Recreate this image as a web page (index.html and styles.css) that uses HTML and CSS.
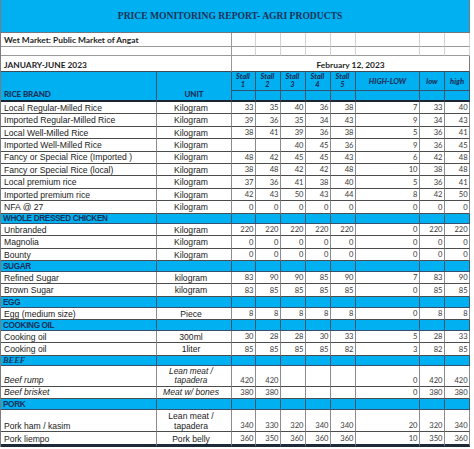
FILE: index.html
```html
<!DOCTYPE html>
<html>
<head>
<meta charset="utf-8">
<link rel="stylesheet" href="styles.css">
</head>
<body>
<table class="sheet">
  <colgroup>
    <col class="c-name"><col class="c-unit">
    <col class="c-s24"><col class="c-s25"><col class="c-s25"><col class="c-s25"><col class="c-s25">
    <col class="c-hl"><col class="c-s25"><col class="c-s25">
  </colgroup>
  <tr class="title"><td colspan="10">PRICE MONITORING REPORT- AGRI PRODUCTS</td></tr>
  <tr class="meta"><td colspan="2" class="lbl">Wet Market: Public Market of Angat</td><td></td><td></td><td></td><td></td><td></td><td></td><td></td><td></td></tr>
  <tr class="meta blank"><td colspan="2"></td><td></td><td></td><td></td><td></td><td></td><td></td><td></td><td></td></tr>
  <tr class="meta period"><td colspan="2" class="lbl">JANUARY-JUNE 2023</td><td colspan="8" class="lbl date">February 12, 2023</td></tr>
  <tr class="hd1">
    <th rowspan="2" class="h-name">RICE BRAND</th>
    <th rowspan="2" class="h-unit">UNIT</th>
    <th class="h-stall">Stall<br>1</th><th class="h-stall">Stall<br>2</th><th class="h-stall">Stall<br>3</th><th class="h-stall">Stall<br>4</th><th class="h-stall">Stall<br>5</th>
    <th class="h-mid">HIGH-LOW</th><th class="h-mid">low</th><th class="h-mid">high</th>
  </tr>
  <tr class="hd2"><td></td><td></td><td></td><td></td><td></td><td></td><td></td><td></td></tr>

  <tr class="item"><td class="name">Local Regular-Milled Rice</td><td class="unit">Kilogram</td><td class="n">33</td><td class="n">35</td><td class="n">40</td><td class="n">36</td><td class="n">38</td><td class="n">7</td><td class="n">33</td><td class="n">40</td></tr>
  <tr class="item"><td class="name">Imported Regular-Milled Rice</td><td class="unit">Kilogram</td><td class="n">39</td><td class="n">36</td><td class="n">35</td><td class="n">34</td><td class="n">43</td><td class="n">9</td><td class="n">34</td><td class="n">43</td></tr>
  <tr class="item"><td class="name">Local Well-Milled Rice</td><td class="unit">Kilogram</td><td class="n">38</td><td class="n">41</td><td class="n">39</td><td class="n">36</td><td class="n">38</td><td class="n">5</td><td class="n">36</td><td class="n">41</td></tr>
  <tr class="item"><td class="name">Imported Well-Milled Rice</td><td class="unit">Kilogram</td><td class="n"></td><td class="n"></td><td class="n">40</td><td class="n">45</td><td class="n">36</td><td class="n">9</td><td class="n">36</td><td class="n">45</td></tr>
  <tr class="item"><td class="name">Fancy or Special Rice (Imported )</td><td class="unit">Kilogram</td><td class="n">48</td><td class="n">42</td><td class="n">45</td><td class="n">45</td><td class="n">43</td><td class="n">6</td><td class="n">42</td><td class="n">48</td></tr>
  <tr class="item"><td class="name">Fancy or Special Rice (local)</td><td class="unit">Kilogram</td><td class="n">38</td><td class="n">48</td><td class="n">42</td><td class="n">42</td><td class="n">48</td><td class="n">10</td><td class="n">38</td><td class="n">48</td></tr>
  <tr class="item"><td class="name">Local premium rice</td><td class="unit">Kilogram</td><td class="n">37</td><td class="n">36</td><td class="n">41</td><td class="n">38</td><td class="n">40</td><td class="n">5</td><td class="n">36</td><td class="n">41</td></tr>
  <tr class="item"><td class="name">Imported premium rice</td><td class="unit">Kilogram</td><td class="n">42</td><td class="n">43</td><td class="n">50</td><td class="n">43</td><td class="n">44</td><td class="n">8</td><td class="n">42</td><td class="n">50</td></tr>
  <tr class="item"><td class="name">NFA @ 27</td><td class="unit">Kilogram</td><td class="n">0</td><td class="n">0</td><td class="n">0</td><td class="n">0</td><td class="n">0</td><td class="n">0</td><td class="n">0</td><td class="n">0</td></tr>

  <tr class="sec s-chicken"><td class="name">WHOLE DRESSED CHICKEN</td><td></td><td></td><td></td><td></td><td></td><td></td><td></td><td></td><td></td></tr>
  <tr class="item"><td class="name">Unbranded</td><td class="unit">Kilogram</td><td class="n">220</td><td class="n">220</td><td class="n">220</td><td class="n">220</td><td class="n">220</td><td class="n">0</td><td class="n">220</td><td class="n">220</td></tr>
  <tr class="item"><td class="name">Magnolia</td><td class="unit">Kilogram</td><td class="n">0</td><td class="n">0</td><td class="n">0</td><td class="n">0</td><td class="n">0</td><td class="n">0</td><td class="n">0</td><td class="n">0</td></tr>
  <tr class="item"><td class="name">Bounty</td><td class="unit">Kilogram</td><td class="n">0</td><td class="n">0</td><td class="n">0</td><td class="n">0</td><td class="n">0</td><td class="n">0</td><td class="n">0</td><td class="n">0</td></tr>

  <tr class="sec s-sugar"><td class="name">SUGAR</td><td></td><td></td><td></td><td></td><td></td><td></td><td></td><td></td><td></td></tr>
  <tr class="item"><td class="name">Refined Sugar</td><td class="unit">kilogram</td><td class="n">83</td><td class="n">90</td><td class="n">90</td><td class="n">85</td><td class="n">90</td><td class="n">7</td><td class="n">83</td><td class="n">90</td></tr>
  <tr class="item"><td class="name">Brown Sugar</td><td class="unit">kilogram</td><td class="n">83</td><td class="n">85</td><td class="n">85</td><td class="n">85</td><td class="n">85</td><td class="n">0</td><td class="n">85</td><td class="n">85</td></tr>

  <tr class="sec s-egg"><td class="name">EGG</td><td></td><td></td><td></td><td></td><td></td><td></td><td></td><td></td><td></td></tr>
  <tr class="item"><td class="name">Egg (medium size)</td><td class="unit">Piece</td><td class="n">8</td><td class="n">8</td><td class="n">8</td><td class="n">8</td><td class="n">8</td><td class="n">0</td><td class="n">8</td><td class="n">8</td></tr>

  <tr class="sec s-oil"><td class="name">COOKING OIL</td><td></td><td></td><td></td><td></td><td></td><td></td><td></td><td></td><td></td></tr>
  <tr class="item"><td class="name">Cooking oil</td><td class="unit">300ml</td><td class="n">30</td><td class="n">28</td><td class="n">28</td><td class="n">30</td><td class="n">33</td><td class="n">5</td><td class="n">28</td><td class="n">33</td></tr>
  <tr class="item"><td class="name">Cooking oil</td><td class="unit">1liter</td><td class="n">85</td><td class="n">85</td><td class="n">85</td><td class="n">85</td><td class="n">82</td><td class="n">3</td><td class="n">82</td><td class="n">85</td></tr>

  <tr class="sec s-beef"><td class="name beef-h">BEEF</td><td></td><td></td><td></td><td></td><td></td><td></td><td></td><td></td><td></td></tr>
  <tr class="item tall rump"><td class="name it">Beef rump</td><td class="unit it"><div class="stack">Lean meat /<br>tapadera</div></td><td class="n">420</td><td class="n">420</td><td class="n"></td><td class="n"></td><td class="n"></td><td class="n">0</td><td class="n">420</td><td class="n">420</td></tr>
  <tr class="item brisket"><td class="name it">Beef brisket</td><td class="unit it">Meat w/ bones</td><td class="n">380</td><td class="n">380</td><td class="n"></td><td class="n"></td><td class="n"></td><td class="n">0</td><td class="n">380</td><td class="n">380</td></tr>

  <tr class="sec s-pork"><td class="name">PORK</td><td></td><td></td><td></td><td></td><td></td><td></td><td></td><td></td><td></td></tr>
  <tr class="item tall ham"><td class="name">Pork ham / kasim</td><td class="unit two">Lean meat /<br>tapadera</td><td class="n">340</td><td class="n">330</td><td class="n">320</td><td class="n">340</td><td class="n">340</td><td class="n">20</td><td class="n">320</td><td class="n">340</td></tr>
  <tr class="item last"><td class="name">Pork liempo</td><td class="unit">Pork belly</td><td class="n">360</td><td class="n">350</td><td class="n">360</td><td class="n">360</td><td class="n">360</td><td class="n">10</td><td class="n">350</td><td class="n">360</td></tr>
</table>
</body>
</html>
```

FILE: styles.css
```css
* { box-sizing: border-box; }

html, body {
  margin: 0;
  padding: 0;
  background: #ffffff;
}

body {
  font-family: "Liberation Sans", Arial, sans-serif;
  color: #1b1b1b;
}

.sheet {
  border-collapse: separate;
  border-spacing: 0;
  table-layout: fixed;
  width: 470px;
  border-left: 1px solid #7c7c7c;
}

.c-name { width: 156px; }
.c-unit { width: 75px; }
.c-s24 { width: 24px; }
.c-s25 { width: 25px; }
.c-hl { width: 64px; }

td, th {
  padding: 0;
  border-right: 1px solid #8c8c8c;
  border-bottom: 1px solid #4c4c4c;
  overflow: hidden;
  white-space: nowrap;
  vertical-align: bottom;
  font-weight: normal;
}

/* title band */
.title td {
  height: 33px;
  background: #00b0f0;
  border-bottom: 1px solid #6f7780;
  border-right: 1px solid #7a7a7a;
  text-align: center;
  vertical-align: middle;
  font-family: "Liberation Serif", "Times New Roman", serif;
  font-weight: bold;
  font-size: 9.6px;
  color: #17325a;
  padding-right: 10px;
  padding-bottom: 1px;
}

/* meta rows */
.meta td {
  height: 14px;
  border-right: 1px solid #d2d2d2;
  border-bottom: 1px solid #9a9a9a;
}
.meta td:first-child { border-right-color: #9a9a9a; }
.meta.blank td { height: 9px; }
.meta.period td { height: 16px; border-bottom-color: #3f4a57; }
.meta .lbl {
  font-family: Lato, "Liberation Sans", sans-serif;
  font-weight: bold;
  font-size: 8.4px;
  color: #1e1e1e;
  padding-left: 3px;
  padding-bottom: 1px;
}
.meta .date {
  text-align: center;
  padding-left: 0;
  border-right-color: #7a7a7a;
}

/* header */
.hd1 th, .hd2 td {
  background: #00b0f0;
  border-right: 1px solid #3e5670;
  color: #18325c;
}
.hd1 th { height: 19px; border-bottom: 1px solid #33506e; }
.hd2 td { height: 11px; border-bottom: 2px solid #1c2633; }
.hd1 .h-name, .hd1 .h-unit {
  border-bottom: 2px solid #1c2633;
  font-family: Lato, "Liberation Sans", sans-serif;
  font-weight: 900;
  font-size: 8px;
  letter-spacing: -0.1px;
  padding-bottom: 1px;
}
.hd1 .h-name { text-align: left; padding-left: 3px; }
.hd1 .h-unit { text-align: center; }
.hd1 .h-stall {
  font-family: Lato, "Liberation Sans", sans-serif;
  font-weight: 900;
  font-style: italic;
  font-size: 7.4px;
  line-height: 8.4px;
  text-align: center;
  vertical-align: top;
  padding-top: 0.5px;
  padding-right: 1px;
}
.hd1 .h-mid {
  font-family: Lato, "Liberation Sans", sans-serif;
  font-weight: 900;
  font-style: italic;
  font-size: 7.6px;
  text-align: center;
  vertical-align: middle;
}

/* data rows */
.item td { height: 12.4px; }
.item .name {
  font-size: 8.6px;
  padding-left: 3px;
  padding-bottom: 0.5px;
  line-height: 10px;
}
.item .unit {
  font-size: 8.6px;
  text-align: center;
  padding-right: 6px;
  padding-bottom: 0.5px;
  line-height: 10px;
}
.item .n {
  font-family: Lato, "Liberation Sans", sans-serif;
  font-size: 7.6px;
  color: #3a3a3a;
  text-align: right;
  padding-right: 1.5px;
  padding-bottom: 1px;
  line-height: 9px;
}
.it { font-style: italic; }

.item.rump td { height: 20.5px; }
.item.brisket td { height: 12px; }
.item.ham td { height: 21.7px; }
.item.last td { height: 15px; border-bottom: 3px solid #1d2a3a; }

.stack {
  line-height: 9.4px;
  font-size: 8.3px;
}
.unit.two { line-height: 10px; }

/* section rows */
.sec td {
  height: 10.7px;
  background: #00b0f0;
  border-right: 1px solid #3e5670;
  border-bottom: 1px solid #35506c;
}
.sec .name {
  font-weight: bold;
  font-size: 8.2px;
  letter-spacing: -0.35px;
  color: #17325a;
  padding-left: 2px;
  line-height: 9px;
}
.sec .beef-h {
  font-family: "Liberation Serif", "Times New Roman", serif;
  font-style: italic;
  font-size: 8.4px;
  letter-spacing: 0;
}
.s-chicken td { height: 10.5px; }
.s-egg td, .s-oil td { height: 11px; }
.s-beef td { height: 10.5px; }
.s-pork td { height: 11.5px; }
```
